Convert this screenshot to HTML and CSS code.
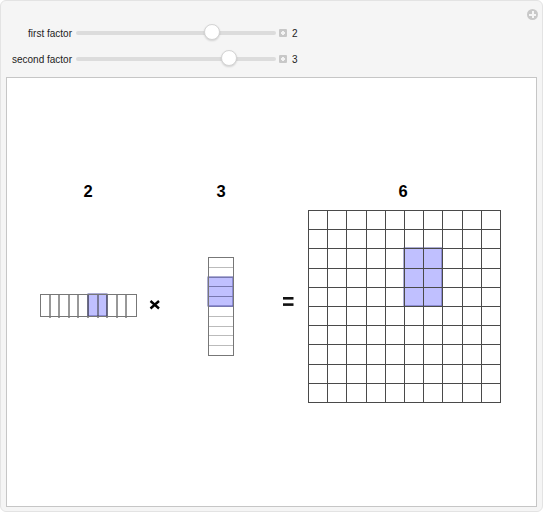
FILE: index.html
```html
<!DOCTYPE html>
<html>
<head>
<meta charset="utf-8">
<link rel="stylesheet" href="styles.css">
</head>
<body>
<div class="app">
  <span class="corner-btn"></span>
  <div class="controls">
    <div class="row">
      <span class="label">first factor</span>
      <div class="track"><span class="thumb" style="left:136px"></span></div>
      <span class="plus"></span>
      <span class="value">2</span>
    </div>
    <div class="row">
      <span class="label">second factor</span>
      <div class="track"><span class="thumb" style="left:153px"></span></div>
      <span class="plus"></span>
      <span class="value">3</span>
    </div>
  </div>
  <div class="stage">
    <svg class="figure" width="529" height="428" viewBox="0 0 529 428">
      <g class="num">
        <text x="81" y="119">2</text>
        <text x="214" y="119">3</text>
        <text x="396" y="119">6</text>
      </g>
      <!-- horizontal bar: first factor -->
      <rect x="33" y="216" width="96" height="22" fill="#fff"/>
      <rect x="81" y="216" width="19" height="22" class="hl"/>
      <path class="dark" d="M43 216V240M52 216V240M62 216V240M71 216V240M81 216V240M91 216V240M100 216V240M110 216V240M119 216V240"/>
      <rect x="33.5" y="216.5" width="96" height="22" class="frame"/>
      <!-- times -->
      <path class="op" d="M143.5 223L152 230.5M152 223L143.5 230.5"/>
      <!-- vertical bar: second factor -->
      <rect x="201" y="179" width="25" height="98" fill="#fff"/>
      <rect x="201" y="199" width="25" height="29" class="hl"/>
      <path class="light" d="M201 189.5H226M201 238.5H226M201 248.5H226M201 257.5H226M201 267.5H226"/>
      <path class="mid" d="M201 199.5H226M201 208.5H226M201 218.5H226M201 228.5H226"/>
      <rect x="201.5" y="179.5" width="25" height="98" class="frame"/>
      <!-- equals -->
      <rect x="276" y="219" width="10.5" height="2.6" fill="#111"/>
      <rect x="276" y="225.3" width="10.5" height="2.6" fill="#111"/>
      <!-- product grid -->
      <rect x="301" y="132" width="192" height="192" fill="#fff"/>
      <rect x="397" y="170" width="38" height="58" class="hl"/>
      <path class="grid" d="M301.5 132V325M320.5 132V325M339.5 132V325M359.5 132V325M378.5 132V325M397.5 132V325M416.5 132V325M435.5 132V325M455.5 132V325M474.5 132V325M493.5 132V325"/>
      <path class="grid" d="M301 132.5H494M301 151.5H494M301 170.5H494M301 190.5H494M301 209.5H494M301 228.5H494M301 247.5H494M301 266.5H494M301 286.5H494M301 305.5H494M301 324.5H494"/>
    </svg>
  </div>
</div>
</body>
</html>
```

FILE: styles.css
```css
html, body {
  margin: 0;
  padding: 0;
  background: #ffffff;
}

.app {
  position: relative;
  box-sizing: border-box;
  width: 543px;
  height: 512px;
  background: #f5f5f5;
  border: 1px solid #e3e3e3;
  border-radius: 6px;
  padding: 25px 4px 0 5px;
  font-family: "Liberation Sans", Arial, sans-serif;
}

.corner-btn {
  position: absolute;
  top: 8px;
  right: 4px;
  width: 11px;
  height: 11px;
  border-radius: 50%;
  background: #c8c8c8;
}

.corner-btn::before,
.corner-btn::after {
  content: "";
  position: absolute;
  background: #f5f5f5;
}

.corner-btn::before {
  left: 2px;
  top: 4.5px;
  width: 7px;
  height: 2px;
}

.corner-btn::after {
  left: 4.5px;
  top: 2px;
  width: 2px;
  height: 7px;
}

.controls {
  display: flex;
  flex-direction: column;
  gap: 12px;
}

.row {
  display: flex;
  align-items: center;
  height: 14px;
}

.label {
  width: 66px;
  text-align: right;
  font-size: 10px;
  color: #222;
  white-space: nowrap;
}

.track {
  position: relative;
  width: 200px;
  height: 4px;
  margin-left: 4px;
  border-radius: 2px;
  background: #dcdcdc;
}

.thumb {
  position: absolute;
  top: -7px;
  width: 16px;
  height: 16px;
  margin-left: -8px;
  box-sizing: border-box;
  border-radius: 50%;
  background: #ffffff;
  border: 1px solid #d4d4d4;
  box-shadow: 0 1px 2px rgba(0, 0, 0, 0.15);
}

.plus {
  position: relative;
  width: 8px;
  height: 8px;
  margin-left: 3px;
  background: #c8c8c8;
  border-radius: 1px;
}

.plus::before,
.plus::after {
  content: "";
  position: absolute;
  background: #f3f3f3;
}

.plus::before {
  left: 2px;
  top: 3px;
  width: 4px;
  height: 2px;
}

.plus::after {
  left: 3px;
  top: 2px;
  width: 2px;
  height: 4px;
}

.value {
  margin-left: 5px;
  font-size: 10px;
  color: #222;
}

.stage {
  box-sizing: border-box;
  width: 531px;
  height: 430px;
  margin-top: 11px;
  background: #ffffff;
  border: 1px solid #c6c6c6;
}

.figure {
  display: block;
}

.num text {
  font-family: "Liberation Sans", Arial, sans-serif;
  font-weight: bold;
  font-size: 16.5px;
  text-anchor: middle;
  fill: #000;
}

.hl {
  fill: #c0c0ff;
  stroke: #5a5aa8;
  stroke-width: 1;
}

.frame {
  fill: none;
  stroke: #777;
  stroke-width: 1;
}

.dark {
  stroke: #333;
  stroke-width: 1;
  fill: none;
}

.light {
  stroke: #bbb;
  stroke-width: 1;
  fill: none;
}

.mid {
  stroke: #7777b0;
  stroke-width: 1;
  fill: none;
}

.grid {
  stroke: #4a4a4a;
  stroke-width: 1;
  fill: none;
}

.op {
  stroke: #000;
  stroke-width: 2.4;
  fill: none;
}
```
